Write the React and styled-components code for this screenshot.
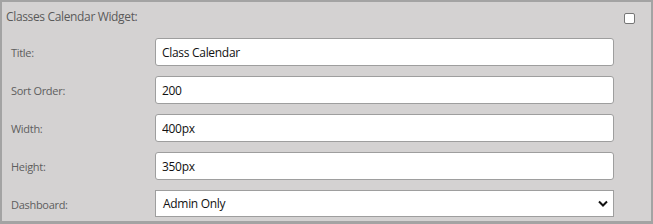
import React from "react";
import styled, { createGlobalStyle } from "styled-components";

const Global = createGlobalStyle`
  html, body { margin: 0; padding: 0; background: #ffffff; }
  * { box-sizing: border-box; }
`;

const Panel = styled.div`
  width: 653px;
  height: 224px;
  background: #d4d2d2;
  border: 2px solid #a3a3a3;
  border-bottom-width: 3px;
  font-family: "Open Sans", "Noto Sans", sans-serif;
  display: flex;
  flex-direction: column;
`;

const Header = styled.div`
  display: flex;
  align-items: center;
  justify-content: space-between;
  height: 28px;
  padding: 0 16px 0 4px;
`;

const HeaderTitle = styled.span`
  font-size: 12px;
  color: #5a5a5a;
  letter-spacing: -0.35px;
`;

const Check = styled.input`
  width: 11px;
  height: 11px;
  margin: 4px 0 0 0;
  appearance: none;
  border: 1px solid #767676;
  border-radius: 2px;
  background: #fff;
`;

const Rows = styled.div`
  display: flex;
  flex-direction: column;
  gap: 10px;
  padding-top: 8px;
`;

const Row = styled.div`
  display: flex;
  align-items: center;
  height: 28px;
`;

const Label = styled.label`
  width: 153px;
  padding-left: 9px;
  font-size: 11px;
  color: #5e5e5e;
  letter-spacing: -0.3px;
`;

const TextInput = styled.input`
  width: 459px;
  height: 28px;
  border: 1px solid #9e9e9e;
  border-radius: 3px;
  background: #fff;
  padding: 0 6px;
  font-family: inherit;
  font-size: 12px;
  color: #111;
  letter-spacing: -0.3px;
  outline: none;
`;

const SelectBox = styled.div`
  width: 459px;
  height: 27px;
  margin-top: -1px;
  border: 1px solid #9e9e9e;
  background: #fff;
  display: flex;
  align-items: center;
  justify-content: space-between;
  padding: 0 5px 0 7px;
  font-size: 12px;
  color: #111;
  letter-spacing: -0.3px;
`;

const fields = [
  ["Title:", "Class Calendar"],
  ["Sort Order:", "200"],
  ["Width:", "400px"],
  ["Height:", "350px"],
];

export default function App() {
  return (
    <>
      <Global />
      <Panel>
        <Header>
          <HeaderTitle>Classes Calendar Widget:</HeaderTitle>
          <Check type="checkbox" />
        </Header>
        <Rows>
          {fields.map(([l, v]) => (
            <Row key={l}>
              <Label>{l}</Label>
              <TextInput defaultValue={v} />
            </Row>
          ))}
          <Row>
            <Label>Dashboard:</Label>
            <SelectBox>
              <span>Admin Only</span>
              <svg width="10" height="7" viewBox="0 0 10 7">
                <path d="M1 1.5 L5 5.5 L9 1.5" fill="none" stroke="#111" strokeWidth="2" />
              </svg>
            </SelectBox>
          </Row>
        </Rows>
      </Panel>
    </>
  );
}
